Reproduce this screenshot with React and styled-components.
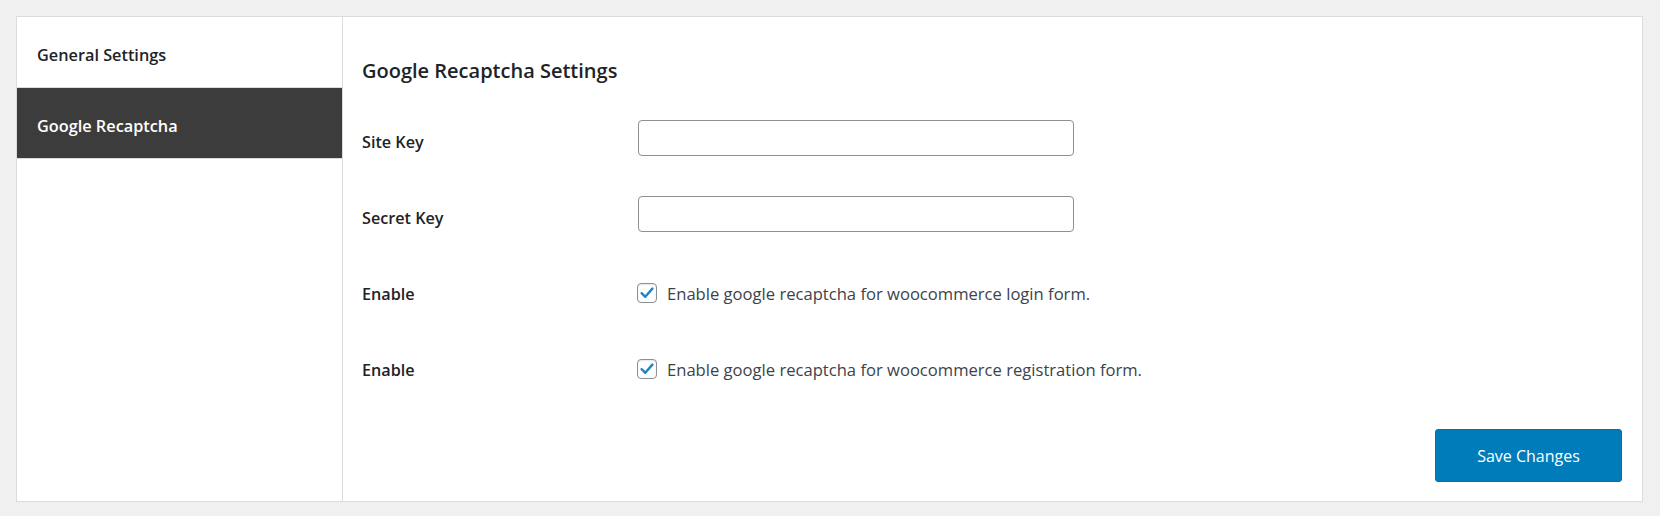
import React from "react";
import styled, { createGlobalStyle } from "styled-components";

const Global = createGlobalStyle`
  html, body { margin: 0; padding: 0; background: #f0f0f1; }
  body { font-family: "Open Sans", "Noto Sans", sans-serif; color: #1d2327; }
  * { box-sizing: border-box; }
`;

const Panel = styled.div`
  margin: 16px 17px 0 16px;
  background: #fff;
  border: 1px solid #dcdcde;
  display: flex;
`;

const Sidebar = styled.nav`
  width: 326px;
  flex: none;
  border-right: 1px solid #dcdcde;
  display: flex;
  flex-direction: column;
`;

const NavItem = styled.a`
  display: flex;
  align-items: center;
  height: 71px;
  padding: 6px 20px 0;
  border-bottom: 1px solid #dcdcde;
  font-size: 16.3px;
  font-weight: 600;
  text-decoration: none;
  background: ${(p) => (p.$active ? "#3c3c3c" : "#fff")};
  color: ${(p) => (p.$active ? "#fff" : "#1d2327")};
`;

const Content = styled.section`
  flex: 1;
  padding: 20px 20px 19px 19px;
  display: flex;
  flex-direction: column;
`;

const Heading = styled.h2`
  margin: 20px 0 15px;
  font-size: 20px;
  line-height: 28px;
  font-weight: 600;
  color: #1d2327;
`;

const Row = styled.div`
  display: grid;
  grid-template-columns: 276px 1fr;
  align-items: center;
  height: ${(p) => p.$h}px;
`;

const Label = styled.label`
  font-size: 16.2px;
  font-weight: 600;
  color: #1d2327;
  margin-top: ${(p) => p.$shift || 0}px;
`;

const TextInput = styled.input`
  width: 436px;
  height: 36px;
  border: 1px solid #8c8f94;
  border-radius: 4px;
  background: #fff;
  padding: 0 8px;
  font: inherit;
  outline: none;
`;

const CheckLine = styled.label`
  display: flex;
  align-items: center;
  gap: 10px;
  font-size: 16.6px;
  color: #3c434a;
  margin-left: -1px;
`;

const Box = styled.span`
  width: 20px;
  height: 20px;
  flex: none;
  border: 1px solid #8c8f94;
  border-radius: 4px;
  background: #fff;
  display: flex;
  align-items: center;
  justify-content: center;
  box-shadow: inset 0 1px 2px rgba(0, 0, 0, 0.1);
`;

const Footer = styled.div`
  display: flex;
  justify-content: flex-end;
  padding-top: 25px;
`;

const Button = styled.button`
  width: 187px;
  height: 53px;
  background: #007cba;
  border: 1px solid #0073aa;
  border-radius: 3px;
  color: #fff;
  font-family: "Open Sans", "Noto Sans", sans-serif;
  font-size: 16px;
  cursor: pointer;
`;

const Check = () => (
  <Box>
    <svg width="16" height="16" viewBox="0 0 16 16">
      <path
        d="M2.6 8.2 L6.3 11.8 L13.4 3.6"
        fill="none"
        stroke="#1f86c4"
        strokeWidth="2.4"
        strokeLinecap="round"
        strokeLinejoin="round"
      />
    </svg>
  </Box>
);

export default function App() {
  return (
    <>
      <Global />
      <Panel>
        <Sidebar>
          <NavItem>General Settings</NavItem>
          <NavItem $active>Google Recaptcha</NavItem>
        </Sidebar>
        <Content>
          <Heading>Google Recaptcha Settings</Heading>
          <Row $h={76}>
            <Label $shift={7}>Site Key</Label>
            <TextInput type="text" />
          </Row>
          <Row $h={76}>
            <Label $shift={7}>Secret Key</Label>
            <TextInput type="text" />
          </Row>
          <Row $h={82}>
            <Label $shift={2}>Enable</Label>
            <CheckLine>
              <Check />
              Enable google recaptcha for woocommerce login form.
            </CheckLine>
          </Row>
          <Row $h={70}>
            <Label $shift={2}>Enable</Label>
            <CheckLine>
              <Check />
              Enable google recaptcha for woocommerce registration form.
            </CheckLine>
          </Row>
          <Footer>
            <Button>Save Changes</Button>
          </Footer>
        </Content>
      </Panel>
    </>
  );
}
